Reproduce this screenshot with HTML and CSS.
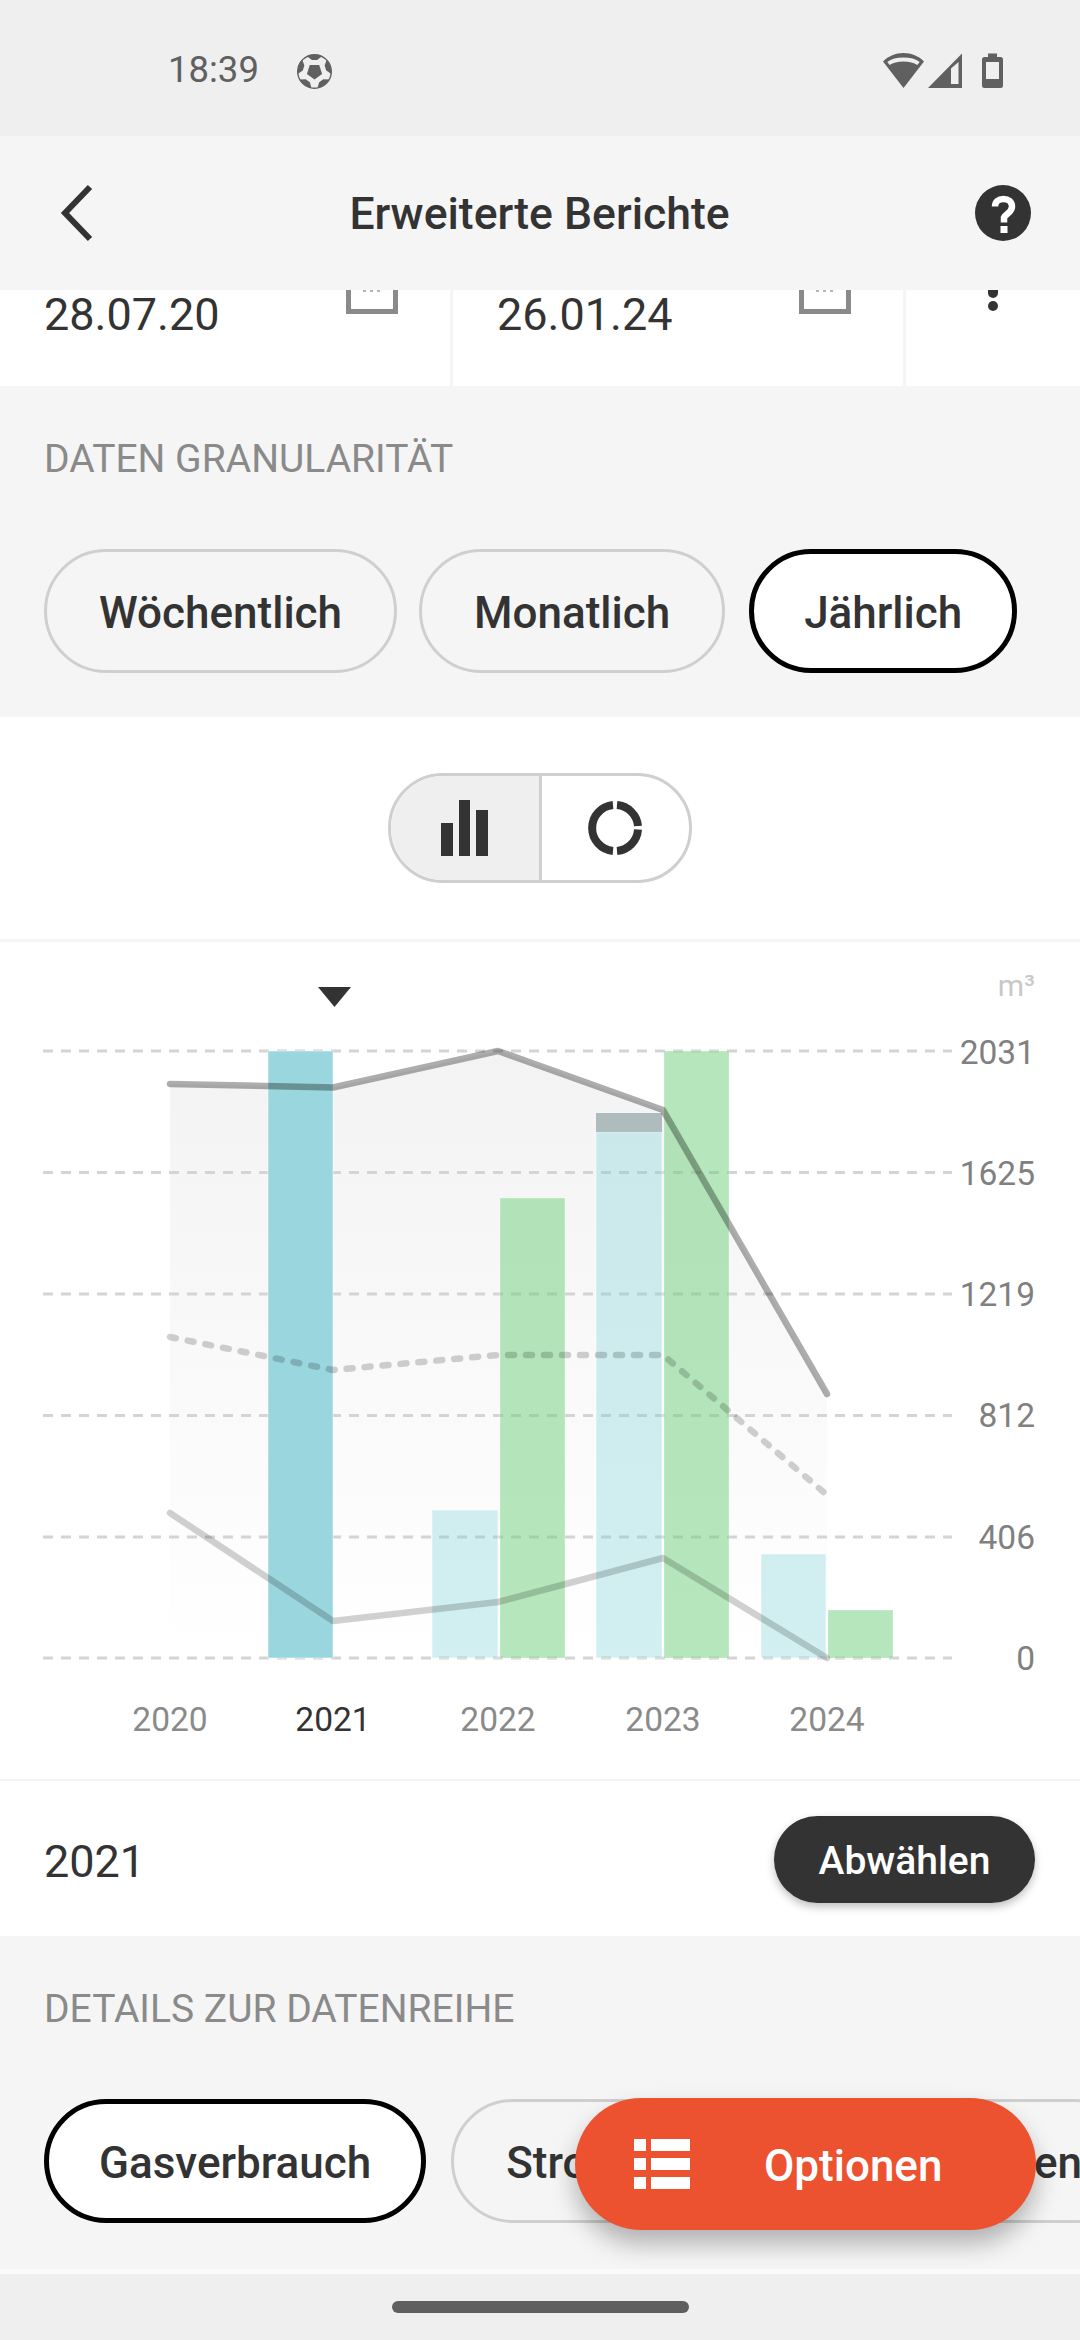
FILE: index.html
```html
<!DOCTYPE html>
<html lang="de">
<head>
  <meta charset="UTF-8">
  <meta name="viewport" content="width=device-width, initial-scale=1.0">
  <title>Erweiterte Berichte</title>
  <link rel="stylesheet" href="styles.css">
</head>
<body>
  <div class="screen">
    <div class="status-bar">
      <span class="clock">18:39</span>
      <svg class="ball" width="35" height="35" viewBox="0 0 35 35">
        <circle cx="17.5" cy="17.5" r="16.8" fill="#efefef" stroke="#606060" stroke-width="1.4"/>
        <g fill="#606060">
          <path d="M22.2 11 25.1 20 17.5 25.500 9.900 20 12.800 11Z"/>
          <path d="M10 2.200 14.900 6H20.100L25 2.200Q17.500-.5 10 2.200Z"/>
          <path d="M10 2.200 14.900 6H20.100L25 2.200Q17.500-.5 10 2.200Z" transform="rotate(72 17.500 17.500)"/>
          <path d="M10 2.200 14.900 6H20.100L25 2.200Q17.500-.5 10 2.200Z" transform="rotate(144 17.500 17.500)"/>
          <path d="M10 2.200 14.900 6H20.100L25 2.200Q17.500-.5 10 2.200Z" transform="rotate(216 17.500 17.500)"/>
          <path d="M10 2.200 14.900 6H20.100L25 2.200Q17.500-.5 10 2.200Z" transform="rotate(288 17.500 17.500)"/>
        </g>
      </svg>
      <div class="status-icons">
        <svg width="124" height="36" viewBox="883 53 124 36">
          <path d="M903.5 53C911.5 53 918.5 56 924 61.500L903.5 88 883 61.500C888.500 56 895.500 53 903.5 53Z" fill="#606060"/>
          <path d="M888.500 63.500C892.500 60.500 897.500 59.500 903.500 59.500S914.500 60.500 918.500 63.500" fill="none" stroke="#efefef" stroke-width="4"/>
          <path d="M928 88 962 53.500V88Z" fill="#606060"/>
          <path d="M951 68.500 958.500 62V84H951Z" fill="#efefef"/>
          <path d="M988 53.500H997V57H1000.500Q1003 57 1003 59.500V85.500Q1003 88 1000.500 88H984.500Q982 88 982 85.500V59.500Q982 57 984.500 57H988Z" fill="#606060"/>
          <rect x="986" y="62" width="13" height="17" fill="#efefef"/>
        </svg>
      </div>
    </div>

    <header class="app-bar">
      <svg class="back" width="34" height="58" viewBox="0 0 34 58">
        <path d="M30 3 5 29 30 55" fill="none" stroke="#333" stroke-width="6"/>
      </svg>
      <h1 class="title">Erweiterte Berichte</h1>
      <svg class="help" width="56" height="56" viewBox="0 0 56 56">
        <circle cx="28" cy="28" r="28" fill="#333"/>
        <path d="M20 21.500C20 16.500 23.500 14 28.500 14 33.500 14 37 17 37 21.500 37 27.500 31.500 28 29 32.500V37.500" fill="none" stroke="#fff" stroke-width="6.500"/>
        <rect x="25.500" y="41" width="7" height="7" fill="#fff"/>
      </svg>
    </header>

    <div class="date-row">
      <div class="date-cell">
        <span class="date">28.07.20</span>
        <svg class="cal" width="52" height="24" viewBox="0 0 52 24">
          <path d="M2.500 0V21.500H49.500V0" fill="none" stroke="#8a8a8a" stroke-width="5"/>
          <path d="M17 1H35" stroke="#b5b5b5" stroke-width="2" stroke-dasharray="3 4"/>
        </svg>
      </div>
      <div class="date-cell">
        <span class="date">26.01.24</span>
        <svg class="cal" width="52" height="24" viewBox="0 0 52 24">
          <path d="M2.500 0V21.500H49.500V0" fill="none" stroke="#8a8a8a" stroke-width="5"/>
          <path d="M17 1H35" stroke="#b5b5b5" stroke-width="2" stroke-dasharray="3 4"/>
        </svg>
      </div>
      <div class="more-cell">
        <span class="dot dot-cut"></span>
        <span class="dot"></span>
      </div>
    </div>

    <section class="panel panel-top">
      <div class="panel-label">DATEN GRANULARITÄT</div>
      <div class="chips">
        <div class="chip">Wöchentlich</div>
        <div class="chip">Monatlich</div>
        <div class="chip chip-on">Jährlich</div>
      </div>
    </section>

    <div class="toggle-row">
      <div class="toggle">
        <div class="toggle-part toggle-on">
          <svg width="47" height="56" viewBox="0 0 47 56">
            <rect x="0" y="23" width="12" height="33" fill="#333"/>
            <rect x="18" y="0" width="11" height="56" fill="#333"/>
            <rect x="35" y="10" width="12" height="46" fill="#333"/>
          </svg>
        </div>
        <div class="toggle-part">
          <svg width="54" height="56" viewBox="0 0 54 56">
            <g fill="none" stroke="#333" stroke-width="8">
              <path d="M25 5.100A23 23 0 0 0 25 50.900"/>
              <path d="M29 5.100A23 23 0 0 1 50 26"/>
              <path d="M50 29.500A23 23 0 0 1 29 50.900"/>
            </g>
          </svg>
        </div>
      </div>
    </div>

    <div class="chart">
      <svg width="1080" height="837" viewBox="0 942 1080 837">
        <defs>
          <linearGradient id="areaFade" x1="0" y1="0" x2="0" y2="1">
            <stop offset="0" stop-color="#f3f3f3"/>
            <stop offset="1" stop-color="#ffffff"/>
          </linearGradient>
        </defs>

        <path d="M318 987H351L334.500 1007Z" fill="#333"/>
        <text x="1035" y="996" text-anchor="end" class="unit">m³</text>

        <path d="M170 1084 333 1087.500 498 1051 663 1110 827 1394V1658H170Z" fill="url(#areaFade)"/>

        <g class="grid">
          <path d="M43 1051H952"/>
          <path d="M43 1172.500H952"/>
          <path d="M43 1294H952"/>
          <path d="M43 1415.500H952"/>
          <path d="M43 1537H952"/>
          <path d="M43 1658H952"/>
        </g>

        <rect class="bar-picked" x="268" y="1051" width="65" height="607"/>
        <rect class="bar-blue" x="432" y="1510" width="66" height="148"/>
        <rect class="bar-green" x="500" y="1198" width="65" height="460"/>
        <rect class="bar-blue" x="596" y="1132" width="66" height="526"/>
        <rect class="bar-over" x="596" y="1113" width="66" height="19"/>
        <rect class="bar-green" x="664" y="1051" width="65" height="607"/>
        <rect class="bar-blue" x="761" y="1554" width="65" height="104"/>
        <rect class="bar-green" x="828" y="1610" width="65" height="48"/>

        <polyline class="line line-dark" points="170,1084 333,1087.500 498,1051 663,1110 827,1394"/>
        <polyline class="line line-light line-dash" points="170,1337 333,1370 498,1355 663,1355 827,1495"/>
        <polyline class="line line-light" points="170,1513 333,1621 498,1602 663,1558 827,1658"/>

        <g class="y-labels">
          <text x="1035" y="1064">2031</text>
          <text x="1035" y="1185">1625</text>
          <text x="1035" y="1306">1219</text>
          <text x="1035" y="1427">812</text>
          <text x="1035" y="1549">406</text>
          <text x="1035" y="1670">0</text>
        </g>
        <g class="x-labels">
          <text x="170" y="1731">2020</text>
          <text x="333" y="1731" class="x-picked">2021</text>
          <text x="498" y="1731">2022</text>
          <text x="663" y="1731">2023</text>
          <text x="827" y="1731">2024</text>
        </g>
      </svg>
    </div>

    <div class="pick-row">
      <span class="pick-year">2021</span>
      <div class="pick-btn">Abwählen</div>
    </div>

    <section class="panel panel-bottom">
      <div class="panel-label">DETAILS ZUR DATENREIHE</div>
      <div class="chips chips-wide">
        <div class="chip chip-on">Gasverbrauch</div>
        <div class="chip">Stromverbrauch</div>
        <div class="chip chip-far">Kosten</div>
      </div>
    </section>

    <div class="nav-bar">
      <span class="home-pill"></span>
    </div>

    <div class="fab">
      <svg width="56" height="50" viewBox="0 0 56 50">
        <g fill="#fff">
          <rect x="0" y="0" width="12" height="12"/>
          <rect x="17" y="0" width="39" height="12"/>
          <rect x="0" y="19" width="12" height="12"/>
          <rect x="17" y="19" width="39" height="12"/>
          <rect x="0" y="38" width="12" height="12"/>
          <rect x="17" y="38" width="39" height="12"/>
        </g>
      </svg>
      <span class="fab-text">Optionen</span>
    </div>
  </div>
</body>
</html>
```

FILE: styles.css
```css
html, body {
    margin: 0;
    padding: 0;
    background: #f5f5f5;
}
body {
    font-family: Roboto, sans-serif;
    color: #333;
}
.screen {
    position: relative;
    width: 1080px;
    height: 2340px;
    overflow: hidden;
    display: flex;
    flex-direction: column;
}

/* status bar */
.status-bar {
    height: 136px;
    flex: none;
    box-sizing: border-box;
    background: #efefef;
    display: flex;
    align-items: center;
    padding: 0 73px 0 168px;
    color: #606060;
}
.clock {
    font-size: 36.500px;
    line-height: 36px;
    margin-top: 4px;
}
.ball {
    margin-left: 38px;
    margin-top: 6px;
}
.status-icons {
    margin-left: auto;
    display: flex;
    margin-top: 6px;
}

/* app bar */
.app-bar {
    height: 154px;
    flex: none;
    box-sizing: border-box;
    background: #f5f5f5;
    display: flex;
    align-items: center;
    justify-content: space-between;
    padding: 0 49px 0 60px;
}
.title {
    margin: 2px 0 0;
    font-size: 44.500px;
    font-weight: 500;
    color: #333;
}
.back {
    margin-right: 10px;
}

/* date row */
.date-row {
    height: 96px;
    flex: none;
    background: #fff;
    display: flex;
    overflow: hidden;
}
.date-cell {
    width: 453px;
    flex: none;
    box-sizing: border-box;
    border-right: 3px solid #f5f5f5;
    display: flex;
    justify-content: space-between;
    padding: 0 52px 0 44px;
}
.date {
    font-size: 45px;
    line-height: 50px;
    color: #333;
}
.more-cell {
    flex: 1;
    display: flex;
    flex-direction: column;
    align-items: center;
    gap: 3px;
}
.dot {
    width: 10px;
    height: 10px;
    border-radius: 50%;
    background: #333;
    flex: none;
}
.dot-cut {
    height: 8px;
    border-radius: 0 0 5px 5px;
}

/* grey panels with chips */
.panel {
    background: #f5f5f5;
    flex: none;
    box-sizing: border-box;
    overflow: hidden;
}
.panel-top {
    height: 331px;
}
.panel-bottom {
    height: 333px;
}
.panel-label {
    font-size: 39px;
    line-height: 44px;
    color: #8a8a8a;
    padding: 51px 44px 0;
}
.chips {
    display: flex;
    gap: 22px;
    padding: 68px 0 0 44px;
}
.chips-wide {
    width: 1400px;
    gap: 25px;
}
.chip {
    height: 124px;
    box-sizing: border-box;
    border: 3px solid #cfcfcf;
    border-radius: 62px;
    padding: 3px 52px 0;
    display: flex;
    align-items: center;
    font-size: 44px;
    font-weight: 500;
    color: #333;
    white-space: nowrap;
}
.chip-on {
    border: 5px solid #000;
    background: #fff;
    padding: 3px 50px 0;
}
.chip + .chip-on {
    margin-left: 2px;
}
.chip-far {
    margin-left: -12px;
}

/* bar or donut switch */
.toggle-row {
    height: 225px;
    flex: none;
    box-sizing: border-box;
    background: #fff;
    border-bottom: 3px solid #f5f5f5;
    display: flex;
    justify-content: center;
    padding-top: 56px;
}
.toggle {
    width: 304px;
    height: 110px;
    box-sizing: border-box;
    border: 3px solid #cfcfcf;
    border-radius: 55px;
    display: flex;
    overflow: hidden;
}
.toggle-part {
    flex: 1;
    display: flex;
    align-items: center;
    justify-content: center;
}
.toggle-on {
    background: #efefef;
    border-right: 3px solid #cfcfcf;
}

/* chart */
.chart {
    height: 839px;
    flex: none;
    box-sizing: border-box;
    background: #fff;
    border-bottom: 2px solid #f3f3f3;
}
.chart svg {
    display: block;
}
.chart text {
    font-family: Roboto, sans-serif;
    font-size: 33.500px;
}
.grid path {
    stroke: #d4d4d4;
    stroke-width: 3;
    stroke-dasharray: 10 8;
    fill: none;
}
.bar-picked {
    fill: #9ad6dd;
    stroke: #fff;
    stroke-opacity: 0.5;
}
.bar-blue {
    fill: rgb(110, 205, 210);
    fill-opacity: 0.31;
    stroke: #fff;
    stroke-opacity: 0.5;
}
.bar-green {
    fill: rgb(110, 208, 122);
    fill-opacity: 0.5;
    stroke: #fff;
    stroke-opacity: 0.3;
}
.bar-over {
    fill: #aebcbe;
}
.line {
    fill: none;
    stroke: #000;
    stroke-width: 6.500;
    stroke-linecap: round;
    stroke-linejoin: round;
}
.line-dark {
    stroke-opacity: 0.32;
}
.line-light {
    stroke-opacity: 0.18;
}
.line-dash {
    stroke-dasharray: 6 12;
}
.y-labels text {
    fill: #808080;
    text-anchor: end;
}
.x-labels text {
    fill: #8a8a8a;
    text-anchor: middle;
}
.x-labels .x-picked {
    fill: #333;
}
.chart .unit {
    fill: #c8c8c8;
    font-size: 30px;
}

/* selected year */
.pick-row {
    height: 155px;
    flex: none;
    box-sizing: border-box;
    background: #fff;
    display: flex;
    align-items: center;
    justify-content: space-between;
    padding: 2px 45px 0 44px;
}
.pick-year {
    font-size: 45px;
    color: #333;
    padding-top: 3px;
}
.pick-btn {
    width: 261px;
    height: 87px;
    box-sizing: border-box;
    padding-top: 3px;
    border-radius: 44px;
    background: #333;
    color: #fff;
    font-size: 39px;
    font-weight: 500;
    display: flex;
    align-items: center;
    justify-content: center;
    box-shadow: 0 4px 8px rgba(0, 0, 0, 0.25);
}

/* bottom */
.nav-bar {
    height: 71px;
    flex: none;
    box-sizing: border-box;
    background: #efefef;
    border-top: 5px solid #fafafa;
    display: flex;
    justify-content: center;
    padding-top: 27px;
}
.home-pill {
    width: 297px;
    height: 12px;
    border-radius: 6px;
    background: #5f5f5f;
}
.fab {
    position: absolute;
    left: 575px;
    top: 2098px;
    width: 461px;
    height: 132px;
    box-sizing: border-box;
    border-radius: 66px;
    background: #ec5230;
    color: #fff;
    display: flex;
    align-items: center;
    padding-left: 59px;
    box-shadow: 0 14px 24px rgba(0, 0, 0, 0.28);
}
.fab-text {
    font-size: 44px;
    font-weight: 500;
    margin-left: 74px;
    padding-top: 3px;
}
```
